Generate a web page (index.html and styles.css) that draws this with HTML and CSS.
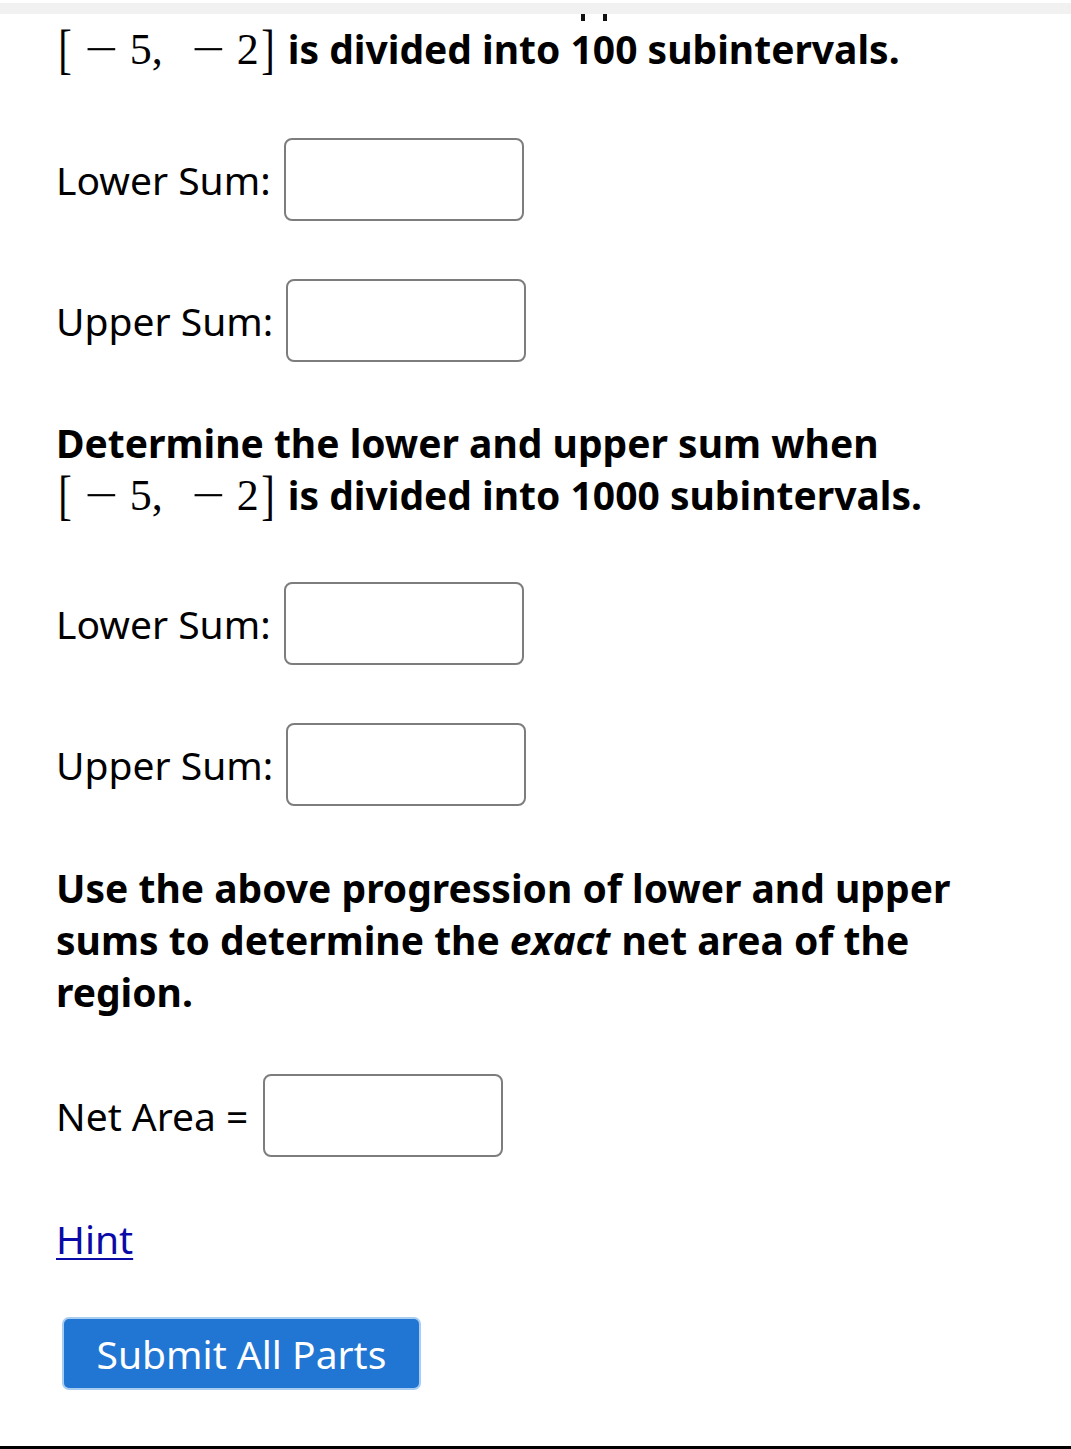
FILE: index.html
```html
<!DOCTYPE html>
<html>
<head>
<meta charset="utf-8">
<link rel="stylesheet" href="styles.css">
</head>
<body>
<div class="topbar"></div>
<div class="ticks"><span class="tick"></span><span class="tick"></span></div>
<main class="content">
  <p class="prompt first"><span class="math"><span class="br">[</span><span class="op">−</span>5,<span class="sp"></span><span class="op">−</span>2<span class="br end">]</span></span> is divided into 100 subintervals.</p>

  <div class="row r1"><label class="lbl">Lower Sum:</label><input class="box" type="text"></div>
  <div class="row r2"><label class="lbl">Upper Sum:</label><input class="box" type="text"></div>

  <p class="prompt q2">Determine the lower and upper sum when<br><span class="math"><span class="br">[</span><span class="op">−</span>5,<span class="sp"></span><span class="op">−</span>2<span class="br end">]</span></span> is divided into 1000 subintervals.</p>

  <div class="row r3"><label class="lbl">Lower Sum:</label><input class="box" type="text"></div>
  <div class="row r4"><label class="lbl">Upper Sum:</label><input class="box" type="text"></div>

  <p class="prompt q3">Use the above progression of lower and upper sums to determine the <em>exact</em> net area of the region.</p>

  <div class="row r5 net"><label class="lbl">Net Area =</label><input class="box" type="text"></div>

  <a class="hint" href="#">Hint</a>

  <button class="submit" type="button">Submit All Parts</button>
</main>
<div class="bottomline"></div>
</body>
</html>
```

FILE: styles.css
```css
html, body {
  margin: 0;
  padding: 0;
  background: #ffffff;
}
body {
  width: 1071px;
  height: 1449px;
  overflow: hidden;
  position: relative;
  font-family: "Noto Sans", "Liberation Sans", sans-serif;
  color: #000;
}
.topbar {
  margin-top: 3px;
  height: 11px;
  background: #f1f1f1;
}
.ticks {
  height: 7px;
  display: flex;
  gap: 18px;
  padding-left: 581px;
}
.tick {
  width: 4px;
  height: 7px;
  background: #111;
}
.content {
  padding-left: 56px;
  display: flex;
  flex-direction: column;
  align-items: flex-start;
}
.prompt {
  margin: 0;
  font-weight: 700;
  font-size: 39px;
  line-height: 52px;
  width: 920px;
}
.prompt.first { margin-top: 2px; }
.prompt em {
  font-style: italic;
  margin-right: 1px;
}
.math {
  font-family: "Liberation Serif", "DejaVu Serif", serif;
  font-weight: 400;
  font-size: 44px;
}
.op {
  display: inline-block;
  margin: 0 16px 0 15px;
  transform: scaleX(1.35);
}
.sp {
  display: inline-block;
  width: 18px;
}
.br {
  display: inline-block;
  font-size: 54px;
  font-weight: 300;
  line-height: 40px;
  vertical-align: -4px;
  transform: scaleX(0.75);
}
.br.end { margin-right: 1px; }
.row {
  display: flex;
  align-items: center;
  gap: 13px;
  height: 83px;
}
.row.net { gap: 15px; }
.lbl {
  font-size: 39px;
  line-height: 44px;
}
.box {
  box-sizing: border-box;
  width: 240px;
  height: 83px;
  border: 2px solid #7d7d7d;
  border-radius: 8px;
  background: #fff;
  margin: 0;
  padding: 0;
}
.r1 { margin-top: 62px; }
.r2 { margin-top: 58px; }
.q2 { margin-top: 55px; }
.r3 { margin-top: 60px; }
.r4 { margin-top: 58px; }
.q3 { margin-top: 56px; }
.r5 { margin-top: 56px; }
.hint {
  margin-top: 56px;
  font-size: 39px;
  line-height: 52px;
  color: #0a0aa8;
  text-decoration: underline;
  text-underline-offset: 4px;
  text-decoration-thickness: 2px;
}
.submit {
  margin-top: 52px;
  margin-left: 6px;
  width: 359px;
  height: 73px;
  background: #2176d3;
  border: 2px solid #a9cdf0;
  border-radius: 7px;
  color: #fff;
  font-family: "Noto Sans", "Liberation Sans", sans-serif;
  font-size: 39px;
  padding: 0;
}
.bottomline {
  position: absolute;
  left: 0;
  right: 0;
  top: 1446px;
  height: 3px;
  background: #000;
}
```
